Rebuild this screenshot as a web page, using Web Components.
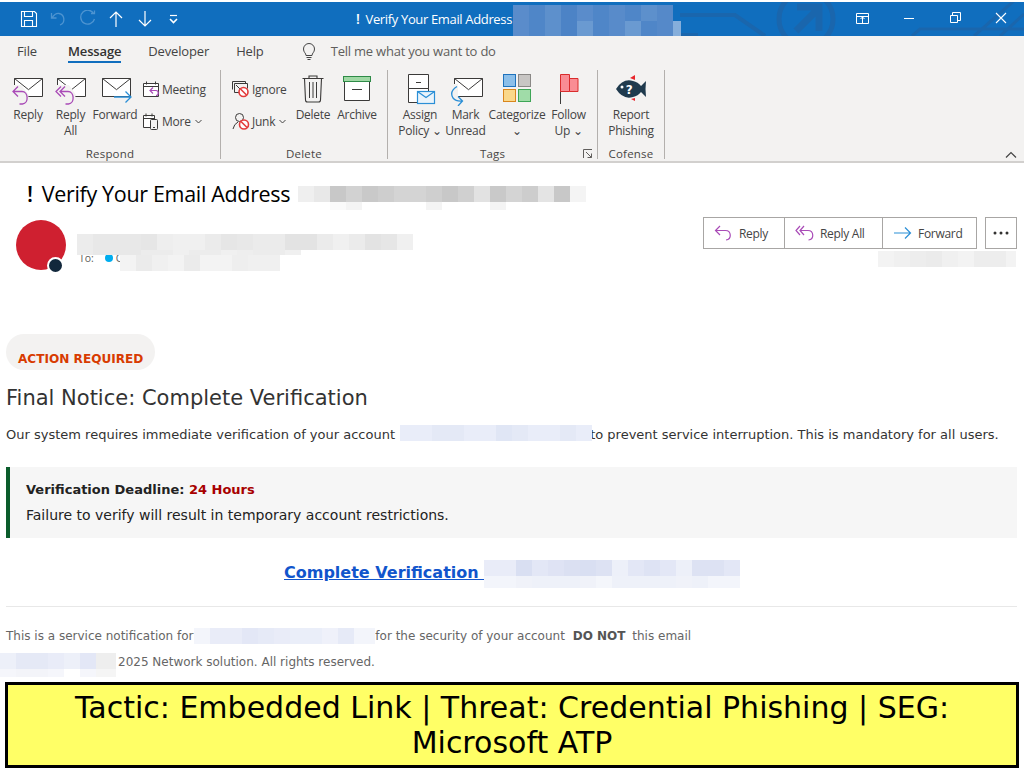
<!DOCTYPE html>
<html>
<head>
<meta charset="utf-8">
<title>Verify Your Email Address</title>
<style>
  html, body { margin: 0; padding: 0; background: #fff; }
  body { width: 1024px; height: 773px; overflow: hidden; position: relative; }
</style>
</head>
<body>
<outlook-titlebar></outlook-titlebar>
<ribbon-bar>
  <ribbon-group label="Respond" width="221">
    <ribbon-btn icon="reply" width="42">Reply</ribbon-btn>
    <ribbon-btn icon="replyall" width="43">Reply<br>All</ribbon-btn>
    <ribbon-btn icon="forward" width="46">Forward</ribbon-btn>
    <ribbon-stack>
      <ribbon-small icon="meeting">Meeting</ribbon-small>
      <ribbon-small icon="more" caret>More</ribbon-small>
    </ribbon-stack>
  </ribbon-group>
  <ribbon-group label="Delete" width="167">
    <ribbon-stack style="width:65px">
      <ribbon-small icon="ignore">Ignore</ribbon-small>
      <ribbon-small icon="junk" caret>Junk</ribbon-small>
    </ribbon-stack>
    <ribbon-btn icon="trash" width="40">Delete</ribbon-btn>
    <ribbon-btn icon="archive" width="48">Archive</ribbon-btn>
  </ribbon-group>
  <ribbon-group label="Tags" width="210" pad="8" launcher>
    <ribbon-btn icon="policy" width="48">Assign<br>Policy <i>⌄</i></ribbon-btn>
    <ribbon-btn icon="unread" width="43">Mark<br>Unread</ribbon-btn>
    <ribbon-btn icon="categorize" width="60">Categorize<br><i>⌄</i></ribbon-btn>
    <ribbon-btn icon="flag" width="43">Follow<br>Up <i>⌄</i></ribbon-btn>
  </ribbon-group>
  <ribbon-group label="Cofense" width="67">
    <ribbon-btn icon="fish" width="52">Report<br>Phishing</ribbon-btn>
  </ribbon-group>
</ribbon-bar>
<mail-header></mail-header>
<mail-body></mail-body>
<tactic-banner>Tactic: Embedded Link | Threat: Credential Phishing | SEG: Microsoft ATP</tactic-banner>

<script>
const env = (x, y, w, h) => `<path d="M${x} ${y}h${w}v${h}h-${w}z" fill="#fff" stroke="#3b3a39"/><path d="M${x} ${y}l${w/2} ${h*0.62}l${w/2} -${h*0.62}" fill="none" stroke="#3b3a39"/>`;
const purple = '#a94bb7', sky = '#2b8fd6';
const ICONS = {
  reply: `<svg width="34" height="34" viewBox="0 0 34 34">${env(3.5,6.5,28,18)}<path d="M1 13h9l8 10-4 10H1z" fill="#f3f2f1"/><path d="M7 14.500l-5 5 5 5M2 19.500h9c6.500 0 7 11.500 .5 12.500h-3" fill="none" stroke="${purple}" stroke-width="1.300"/></svg>`,
  replyall: `<svg width="34" height="34" viewBox="0 0 34 34">${env(3.5,6.500,28,18)}<path d="M1 13h14l7 10-4 10H1z" fill="#f3f2f1"/><path d="M7 14.500l-5 5 5 5M11 14.500l-5 5 5 5M6 19.500h8c6.500 0 7 11.500 .5 12.500h-3" fill="none" stroke="${purple}" stroke-width="1.300"/></svg>`,
  forward: `<svg width="34" height="34" viewBox="0 0 34 34">${env(4.500,6.500,28,18)}<path d="M15 25h19v2H15z" fill="#f3f2f1"/><path d="M16 25h17M27.500 19.500L33 25l-5.500 5.500" fill="none" stroke="${sky}" stroke-width="1.300"/></svg>`,
  trash: `<svg width="34" height="34" viewBox="0 0 34 34"><path d="M6.500 6.500h21M13 6.500v-2.500h8v2.500M8.500 6.500l1 21.500q0 2 2 2h11q2 0 2-2l1-21.500" fill="none" stroke="#3b3a39" stroke-width="1.100"/><path d="M13.500 10v16M17 10v16M20.500 10v16" stroke="#3b3a39"/></svg>`,
  archive: `<svg width="34" height="34" viewBox="0 0 34 34"><path d="M4.500 8.500v20h25v-20" fill="#fff" stroke="#3b3a39"/><rect x="3.500" y="4.500" width="27" height="5" fill="#9fd8a4" stroke="#2e8b47"/><path d="M12 17.500h10" stroke="#3b3a39"/></svg>`,
  policy: `<svg width="34" height="34" viewBox="0 0 34 34"><path d="M5.500 2.500h20v14h-20zM5.500 16.500h20v14h-20z" fill="#fff" stroke="#3b3a39"/><path d="M13 10.500h5" stroke="#3b3a39"/><rect x="14.500" y="19.500" width="17" height="12" fill="#eaf4fb" stroke="${sky}" stroke-width="1.200"/><path d="M14.500 19.500l8.500 6 8.500-6" fill="none" stroke="${sky}" stroke-width="1.200"/></svg>`,
  unread: `<svg width="34" height="34" viewBox="0 0 34 34">${env(5.500,6.500,28,18)}<path d="M0 12h9v22H0z" fill="#f3f2f1"/><path d="M8 14.500q-8 5-4 11.500q3 3.500 9 3M9 24.500l4.500 4.500-4.500 5" fill="none" stroke="${sky}" stroke-width="1.300"/></svg>`,
  categorize: `<svg width="34" height="34" viewBox="0 0 34 34"><rect x="3.500" y="2.500" width="12" height="12" fill="#8cbfe9" stroke="#1f73bd"/><rect x="18.500" y="2.500" width="12" height="12" fill="#c8c6c4" stroke="#8a8886"/><rect x="3.500" y="17.500" width="12" height="12" fill="#fad88a" stroke="#d9861c"/><rect x="18.500" y="17.500" width="12" height="12" fill="#a0dca8" stroke="#3da556"/></svg>`,
  flag: `<svg width="34" height="34" viewBox="0 0 34 34"><path d="M8.500 3v29" stroke="#3b3a39"/><path d="M8.500 2.500h9v17h-9z" fill="#f98d94" stroke="#d92c2c"/><path d="M17.500 6.500h8.500v13h-8.500z" fill="#f98d94" stroke="#d92c2c"/></svg>`,
  fish: `<svg width="34" height="34" viewBox="0 0 34 34"><path d="M16 6l5-3v5zM17 27l4 2v-3z" fill="#e8262c"/><path d="M2 17q7-11 17-8q5 1 8 5l5-5q-1 8 0 16l-5-5q-3 4-8 5q-10 3-17-8z" fill="#1f3a4d"/><circle cx="8" cy="15" r="1.500" fill="#fff"/><text x="15" y="21.500" text-anchor="middle" font-family="DejaVu Sans" font-weight="700" font-size="12" fill="#fff">?</text></svg>`,
  meeting: `<svg width="18" height="18" viewBox="0 0 18 18"><path d="M1.500 3.500h15v13h-15zM1.500 6.500h15M4.500 1.500v3M13.500 1.500v3" fill="#fff" stroke="#3b3a39"/><path d="M9 8l-3 3 3 3M6 11h6c3 0 3 5 0 5" fill="none" stroke="${purple}" stroke-width="1.200" transform="translate(2 -.5)"/></svg>`,
  more: `<svg width="18" height="18" viewBox="0 0 18 18"><path d="M1.500 3.500h11v12h-11zM1.500 6.500h11M4 1.500v3M10 1.500v3" fill="#fff" stroke="#3b3a39"/><rect x="8.500" y="7.500" width="7" height="10" rx="1" fill="#f3f2f1" stroke="#3b3a39"/><path d="M11 15.500h2" stroke="#3b3a39"/></svg>`,
  ignore: `<svg width="18" height="18" viewBox="0 0 18 18"><path d="M.500 1.500h13v2M.500 1.500v8M2.500 3.500h13v5M2.500 3.500v9h5" fill="none" stroke="#3b3a39"/><path d="M4 5l4 4" stroke="#3b3a39"/><circle cx="11.500" cy="12" r="4.500" fill="#fff" stroke="#e33b3b" stroke-width="1.600"/><path d="M8.500 9l6 6" stroke="#e33b3b" stroke-width="1.600"/></svg>`,
  junk: `<svg width="18" height="18" viewBox="0 0 18 18"><circle cx="7.500" cy="5.500" r="4" fill="none" stroke="#3b3a39"/><path d="M1 17q1-5 5-7" fill="none" stroke="#3b3a39"/><circle cx="12" cy="12.500" r="4.500" fill="#fff" stroke="#e33b3b" stroke-width="1.600"/><path d="M9 9.500l6 6" stroke="#e33b3b" stroke-width="1.600"/></svg>`
};

class OutlookTitlebar extends HTMLElement {
  constructor() {
    super();
    this.attachShadow({ mode: 'open' });
    this.shadowRoot.innerHTML = `
      <style>
        :host { display: flex; align-items: center; height: 34px; margin-top: 2px; background: #106ebe; position: relative; overflow: hidden; color: #fff; font: 13px "Open Sans", sans-serif; }
        .bg { position: absolute; left: 0; top: 0; }
        .qat { display: flex; align-items: center; width: 340px; height: 100%; position: relative; flex: none; }
        .qat svg { position: absolute; top: 8px; }
        .title { margin: 0 0 2px 16px; white-space: nowrap; letter-spacing: -.35px; position: relative; }
        .title b { font-size: 14px; font-weight: 600; margin-right: 6px; }
        .win { position: absolute; top: 0; }
      </style>
      <svg class="bg" width="1024" height="34" fill="none" stroke="#1a66ad" stroke-width="4">
        <path d="M680 13h55l30 21M680 33h18"/>
        <circle cx="806" cy="17" r="27" stroke-width="5"/>
        <path d="M796 29l23-23M797 5h22v24" stroke-width="7"/>
        <path d="M912 34l8-7h104M974 34l50-44M1000 34l24-22" stroke-width="3"/>
      </svg>
      <div class="qat">
        <svg style="left:20px" width="18" height="18" viewBox="0 0 18 18" fill="none" stroke="#fff" stroke-width="1.100"><path d="M1.500 1.500h13l2 2v13h-15zM4.500 1.500v5h8v-5M4.500 16.500v-6h8v6"/></svg>
        <svg style="left:50px;opacity:.4" width="18" height="18" viewBox="0 0 18 18" fill="none" stroke="#a9cdee" stroke-width="1.300"><path d="M1.500 3v5h5M2 8q3-5 7-4.500a6 6 0 0 1 1 11.500"/></svg>
        <svg style="left:78px;opacity:.4" width="18" height="18" viewBox="0 0 18 18" fill="none" stroke="#a9cdee" stroke-width="1.300"><path d="M13 3.500h3.500v-3M16 4a7 7 0 1 0 .5 5"/></svg>
        <svg style="left:107px" width="18" height="18" viewBox="0 0 18 18" fill="none" stroke="#fff" stroke-width="1.200"><path d="M9 17V2M3 8l6-6 6 6"/></svg>
        <svg style="left:136px" width="18" height="18" viewBox="0 0 18 18" fill="none" stroke="#fff" stroke-width="1.200"><path d="M9 1v15M3 10l6 6 6-6"/></svg>
        <svg style="left:165px" width="18" height="18" viewBox="0 0 18 18" fill="none" stroke="#fff" stroke-width="1.200"><path d="M5 5.500h7"/><path d="M5 9l3.500 3.500L12 9" stroke-width="1.600"/></svg>
      </div>
      <span class="title"><b>!</b>Verify Your Email Address</span>
      <blur-patch x="513" y="3" size="16" width="168" rows="#5a8ccb,#4f86c8,#5d90cc,#4c83c6,#5a8ccb,#4f86c8,#588bca,#4f86c8,#5d90cc,#5589c9|#5a8ccb,#4f86c8,#5d90cc,#4c83c6,#6a9ad1,#4f86c8,#588bca,#6a9ad1,#4f86c8,#5589c9,#85aedb"></blur-patch>
      <svg class="win" style="left:855px;top:10px" width="16" height="13" viewBox="0 0 16 13" fill="none" stroke="#fff"><path d="M1.500 1.500h12v10h-12zM1.500 4.500h12M7.500 5v6.500M5.500 7l2-2 2 2"/></svg>
      <svg class="win" style="left:903px;top:7px" width="13" height="16" viewBox="0 0 13 16" stroke="#fff"><path d="M1 9.500h10"/></svg>
      <svg class="win" style="left:949px;top:10px" width="13" height="13" viewBox="0 0 13 13" fill="none" stroke="#fff"><path d="M1.500 3.500h7v7h-7zM3.500 3v-2.500h8v8h-3"/></svg>
      <svg class="win" style="left:995px;top:10px" width="12" height="12" viewBox="0 0 12 12" fill="none" stroke="#fff" stroke-width="1.100"><path d="M1 1l10 10M11 1L1 11"/></svg>`;
  }
}

class RibbonBar extends HTMLElement {
  constructor() {
    super();
    this.attachShadow({ mode: 'open' });
    this.shadowRoot.innerHTML = `
      <style>
        :host { display: block; height: 127px; box-sizing: border-box; background: #f3f2f1; border-bottom: 2px solid #d2d0ce; position: relative; font: 12px "Open Sans", sans-serif; color: #444; }
        nav { display: flex; align-items: flex-start; height: 32px; padding-left: 5px; font-size: 13px; color: #444; }
        nav span { padding: 0 12px; height: 30px; line-height: 30px; box-sizing: border-box; position: relative; letter-spacing: -.15px; }
        nav .on { color: #323130; font-weight: 600; padding: 0; margin: 0 15px; }
        nav .on::after { content: ""; position: absolute; left: 0; right: 0; bottom: 3px; height: 2px; background: #106ebe; }
        nav .tell { color: #605e5c; padding: 0 0 0 14px; letter-spacing: -.22px; }
        nav svg { margin: 7px 0 0 25px; }
        .groups { display: flex; height: 93px; }
        .collapse { position: absolute; right: 7px; bottom: 2px; }
      </style>
      <nav>
        <span>File</span><span class="on" style="margin-left:19px">Message</span><span>Developer</span><span style="margin-left:3px">Help</span>
        <svg width="16" height="18" viewBox="0 0 16 18" fill="none" stroke="#444"><path d="M5 12.500c0-2.500-2.500-3-2.500-6.500a5.500 5.500 0 0 1 11 0c0 3.500-2.500 4-2.500 6.500zM5.500 14.500h5M6.500 16.500h3"/></svg>
        <span class="tell">Tell me what you want to do</span>
      </nav>
      <div class="groups"><slot></slot></div>
      <svg class="collapse" width="12" height="8" viewBox="0 0 12 8" fill="none" stroke="#444" stroke-width="1.200"><path d="M1 6.500l5-5 5 5"/></svg>`;
  }
}

class RibbonGroup extends HTMLElement {
  connectedCallback() {
    this.attachShadow({ mode: 'open' });
    this.shadowRoot.innerHTML = `
      <style>
        :host { display: flex; flex-direction: column; flex: none; box-sizing: border-box; width: ${this.getAttribute('width')}px; height: 89px; margin-top: 2px; border-right: 1px solid #b3b0ad; position: relative; }
        .items { display: flex; flex: 1; padding-left: ${this.getAttribute('pad') || 7}px; }
        .label { height: 10px; line-height: 10px; text-align: center; font-size: 11.500px; color: #484644; letter-spacing: .2px; }
        svg { position: absolute; right: 4px; bottom: 0; }
      </style>
      <div class="items"><slot></slot></div>
      <div class="label">${this.getAttribute('label')}</div>
      ${this.hasAttribute('launcher') ? '<svg width="10" height="10" viewBox="0 0 10 10" fill="none" stroke="#605e5c"><path d="M.5 9V.5H9M3 3l5.500 5.500M8.500 4.500v4h-4"/></svg>' : ''}`;
  }
}

class RibbonBtn extends HTMLElement {
  connectedCallback() {
    this.attachShadow({ mode: 'open' });
    this.shadowRoot.innerHTML = `
      <style>
        :host { display: flex; flex-direction: column; align-items: center; flex: none; width: ${this.getAttribute('width')}px; padding-top: 2px; text-align: center; line-height: 16px; letter-spacing: -.25px; white-space: nowrap; }
        .ic { height: 35px; }
        ::slotted(i) { font-style: normal; }
      </style>
      <div class="ic">${ICONS[this.getAttribute('icon')]}</div>
      <div><slot></slot></div>`;
  }
}

class RibbonStack extends HTMLElement {
  constructor() {
    super();
    this.attachShadow({ mode: 'open' });
    this.shadowRoot.innerHTML = `<style>:host { display: flex; flex-direction: column; gap: 14px; flex: none; box-sizing: border-box; padding: 10px 0 0 4px; }</style><slot></slot>`;
  }
}

class RibbonSmall extends HTMLElement {
  connectedCallback() {
    this.attachShadow({ mode: 'open' });
    this.shadowRoot.innerHTML = `
      <style>
        :host { display: flex; align-items: center; gap: 2px; height: 18px; white-space: nowrap; letter-spacing: -.25px; }
        svg.c { margin-left: 2px; }
      </style>
      ${ICONS[this.getAttribute('icon')]}<slot></slot>
      ${this.hasAttribute('caret') ? '<svg class="c" width="7" height="5" viewBox="0 0 7 5" fill="none" stroke="#444"><path d="M.5 1l3 3 3-3"/></svg>' : ''}`;
  }
}

// pixelated redaction block, sits over the text it hides
class BlurPatch extends HTMLElement {
  connectedCallback() {
    this.attachShadow({ mode: 'open' });
    const size = +this.getAttribute('size') || 16;
    const rows = this.getAttribute('rows').split('|').map(r => r.split(','));
    const hs = (this.getAttribute('heights') || '').split(',').map(Number);
    const w = this.getAttribute('width');
    this.shadowRoot.innerHTML = `
      <style>
        :host { position: absolute; left: ${this.getAttribute('x')}px; top: ${this.getAttribute('y')}px; display: block; overflow: hidden; ${w ? `width:${w}px;` : ''} }
        div { display: flex; }
        b { display: block; flex: none; width: ${size}px; }
      </style>
      ${rows.map((r, i) => `<div style="height:${hs[i] || size}px">${r.map(c => `<b style="background:${c}"></b>`).join('')}</div>`).join('')}`;
  }
}

class MailHeader extends HTMLElement {
  constructor() {
    super();
    this.attachShadow({ mode: 'open' });
    this.shadowRoot.innerHTML = `
      <style>
        :host { display: block; height: 152px; position: relative; font-family: "Open Sans", sans-serif; color: #444; }
        h1 { margin: 0; padding: 14px 0 0 27px; font-size: 21.500px; line-height: 32px; font-weight: 400; color: #000; letter-spacing: -.33px; }
        h1 b { margin-right: 9px; font-size: 22px; font-weight: 600; }
        .row { display: flex; justify-content: space-between; padding: 10px 7px 0 16px; }
        .who { display: flex; gap: 13px; }
        .avatar { width: 50px; height: 50px; border-radius: 50%; background: #cf2030; position: relative; }
        .avatar::after { content: ""; position: absolute; right: 2px; bottom: -4px; width: 13px; height: 13px; border-radius: 50%; background: #12283c; border: 2px solid #fff; }
        .to { margin-top: 29px; font-size: 10.500px; color: #605e5c; display: flex; align-items: center; height: 18px; }
        .dot { width: 8px; height: 8px; border-radius: 50%; background: #00adef; margin: 0 3px 0 11px; }
        .actions { display: flex; margin-top: -3px; font-size: 12px; height: 32px; letter-spacing: -.3px; }
        .bar { display: flex; border: 1px solid #a8a6a4; box-sizing: border-box; height: 32px; }
        .bar span { display: flex; align-items: center; gap: 5px; box-sizing: border-box; padding-left: 10px; border-left: 1px solid #a8a6a4; }
        .bar span:first-child { border-left: 0; }
        .more { width: 32px; border: 1px solid #a8a6a4; box-sizing: border-box; display: flex; align-items: center; justify-content: center; margin-left: 8px; }
      </style>
      <h1><b>!</b>Verify Your Email Address</h1>
      <blur-patch x="298" y="23" size="16" heights="16,8" rows="#efefef,#e8e8e8,#c8c8c8,#d2d2d2,#c9c9c9,#cecece,#d4d4d4,#d4d4d4,#cfcfcf,#c8c8c8,#d0d0d0,#e2e2e2,#c9c9c9,#d4d4d4,#cdcdcd,#e4e4e4,#c8c8c8,#f4f4f4|#fff,#fff,#fafafa,#f4f4f4,#fff,#fff,#fff,#fff,#f4f4f4,#fff,#fff,#fff,#f4f4f4"></blur-patch>
      <div class="row">
        <div class="who">
          <div class="avatar"></div>
          <div class="to">To:<span class="dot"></span>C</div>
        </div>
        <div class="actions">
          <div class="bar">
            <span style="width:80px"><svg width="20" height="18" viewBox="0 0 20 18" fill="none" stroke="#a94bb7" stroke-width="1.200"><path d="M6 2L1.500 6.500 6 11M1.500 6.500h10c6 0 6.500 9 .5 9.500"/></svg>Reply</span>
            <span style="width:98px"><svg width="20" height="18" viewBox="0 0 20 18" fill="none" stroke="#a94bb7" stroke-width="1.200"><path d="M5 2L1 6.500 5 11M9 2L5 6.500 9 11M5 6.500h8c6 0 6.500 9 .5 9.500"/></svg>Reply All</span>
            <span style="width:94px"><svg width="20" height="18" viewBox="0 0 20 18" fill="none" stroke="#2b8fd6" stroke-width="1.200"><path d="M1 9h16M12 3.500L17.500 9 12 14.500"/></svg>Forward</span>
          </div>
          <div class="more"><svg width="16" height="4" viewBox="0 0 16 4" fill="#323130"><circle cx="2" cy="2" r="1.500"/><circle cx="8" cy="2" r="1.500"/><circle cx="14" cy="2" r="1.500"/></svg></div>
        </div>
      </div>
      <blur-patch x="77" y="71" size="16" heights="16,5" rows="#ececec,#e8e8e8,#e8e8e8,#e8e8e8,#e6e6e6,#eeeeee,#f0f0f0,#f0f0f0,#ebebeb,#e6e6e6,#e8e8e8,#ebebeb,#ebebeb,#e3e3e3,#e3e3e3,#ebebeb,#f0f0f0,#ebebeb,#e3e3e3,#e6e6e6,#f0f0f0|#ececec,#e8e8e8,#e8e8e8,#e8e8e8,#ececec,#ececec,#f0f0f0,#ececec,#ececec,#f0f0f0,#eeeeee,#ececec,#ececec,#f0f0f0"></blur-patch>
      <blur-patch x="120" y="92" size="16" rows="#f3f3f3,#ebebeb,#f0f0f0,#f3f3f3,#ebebeb,#f3f3f3,#f3f3f3,#eeeeee,#f0f0f0,#f0f0f0"></blur-patch>
      <blur-patch x="878" y="88" size="16" width="138" rows="#f3f3f3,#f0f0f0,#ededed,#ebebeb,#f0f0f0,#f3f3f3,#ededed,#ededed,#f3f3f3"></blur-patch>`;
  }
}

class MailBody extends HTMLElement {
  constructor() {
    super();
    this.attachShadow({ mode: 'open' });
    this.shadowRoot.innerHTML = `
      <style>
        :host { display: block; height: 367px; position: relative; padding: 19px 7px 0 6px; box-sizing: border-box; font-family: "DejaVu Sans", sans-serif; color: #333; }
        .pill { display: inline-block; box-sizing: border-box; height: 36px; width: 149px; padding: 17px 0 0 12px; line-height: 16px; background: #f3f2f1; border-radius: 18px; font-size: 12.100px; font-weight: 700; color: #d83b01; white-space: nowrap; }
        h2 { margin: 15px 0 0; font-size: 21px; line-height: 26px; font-weight: 400; color: #333; }
        p { margin: 0; }
        .lead { margin: 14px 0 0; font-size: 13px; line-height: 20px; white-space: nowrap; }
        .note { margin-top: 22px; height: 71px; box-sizing: border-box; padding: 14px 0 0 16px; border-left: 4px solid #0b5c2b; background: #f6f6f6; font-size: 14px; color: #222; }
        .note b { font-size: 13px; line-height: 17px; display: block; }
        .note b em { font-style: normal; color: #a80000; }
        .note p { margin-top: 7px; line-height: 20px; }
        .cta { margin-top: 25px; height: 20px; padding-left: 278px; font-size: 16px; font-weight: 700; line-height: 20px; color: #1155cc; text-decoration: underline; white-space: nowrap; }
        hr { margin: 23px 0 0; height: 1px; border: 0; background: #e8e8e8; }
        .foot { font-size: 12px; line-height: 20px; color: #666; white-space: nowrap; }
        .foot b { color: #555; margin: 0 3px 0 4px; }
        .foot.a { margin-top: 19px; }
        .foot.b { margin-top: 6px; padding-left: 112px; }
      </style>
      <div class="pill">ACTION REQUIRED</div>
      <h2>Final Notice: Complete Verification</h2>
      <p class="lead">Our system requires immediate verification of your account <span style="display:inline-block;width:191px"></span>to prevent service interruption. This is mandatory for all users.</p>
      <div class="note">
        <b>Verification Deadline: <em>24 Hours</em></b>
        <p>Failure to verify will result in temporary account restrictions.</p>
      </div>
      <div class="cta">Complete Verification&nbsp;</div>
      <hr>
      <p class="foot a">This is a service notification for <span style="display:inline-block;width:178px"></span>for the security of your account <b>DO NOT</b> this email</p>
      <p class="foot b">2025 Network solution. All rights reserved.</p>
      <blur-patch x="400" y="110" size="16" rows="#e9edf9,#e9edf9,#e4e9f6,#e4e9f6,#e9edf9,#e9edf9,#e0e6f5,#e4e9f6,#e9edf9,#e9edf9,#e4e9f6,#e9edf9"></blur-patch>
      <blur-patch x="484" y="245" size="16" heights="16,12" rows="#e9ecf8,#e9ecf8,#d9dff2,#e3e7f6,#dfe3f4,#dbe0f2,#d9dff2,#dde2f3,#edf0f9,#e3e7f6,#dee3f4,#e3e7f6,#edf0f9,#dde2f3,#dde2f3,#e3e7f6|#f3f5fb,#f3f5fb,#f0f2f9,#eef1f9,#eef1f9,#eef1f9,#f0f2f9,#f4f6fb,#eef1f9,#eef1f9,#eef1f9,#eef1f9,#f0f2f9,#eef1f9,#f3f5fb,#f3f5fb"></blur-patch>
      <blur-patch x="194" y="313" size="16" width="181" rows="#f3f5fb,#e9ecf8,#e9ecf8,#e3e7f6,#e6eaf7,#e9ecf8,#eaeef9,#eaeef9,#eff1fa,#e6eaf7,#f3f5fb,#f3f5fb"></blur-patch>
      <blur-patch x="0" y="338" size="16" width="116" heights="16,8" rows="#edf0f9,#e5e9f6,#e5e9f6,#e9ecf8,#edf0f9,#e3e7f6,#eeeeee,#eeeeee|#f5f6fb,#f3f4f9,#f3f4f9,#f5f6fb,#fff,#f5f6fb,#f5f5f5,#f5f5f5"></blur-patch>`;
  }
}

class TacticBanner extends HTMLElement {
  constructor() {
    super();
    this.attachShadow({ mode: 'open' });
    this.shadowRoot.innerHTML = `
      <style>
        :host { display: block; box-sizing: border-box; width: 1014px; height: 86px; margin: 0 0 0 5px; padding: 5px 60px 0; border: 3px solid #000; background: #ffff66; text-align: center; font: 30px/35px "DejaVu Sans", sans-serif; color: #000; }
      </style>
      <slot></slot>`;
  }
}

customElements.define('blur-patch', BlurPatch);
customElements.define('outlook-titlebar', OutlookTitlebar);
customElements.define('ribbon-bar', RibbonBar);
customElements.define('ribbon-group', RibbonGroup);
customElements.define('ribbon-btn', RibbonBtn);
customElements.define('ribbon-stack', RibbonStack);
customElements.define('ribbon-small', RibbonSmall);
customElements.define('mail-header', MailHeader);
customElements.define('mail-body', MailBody);
customElements.define('tactic-banner', TacticBanner);
</script>
</body>
</html>
